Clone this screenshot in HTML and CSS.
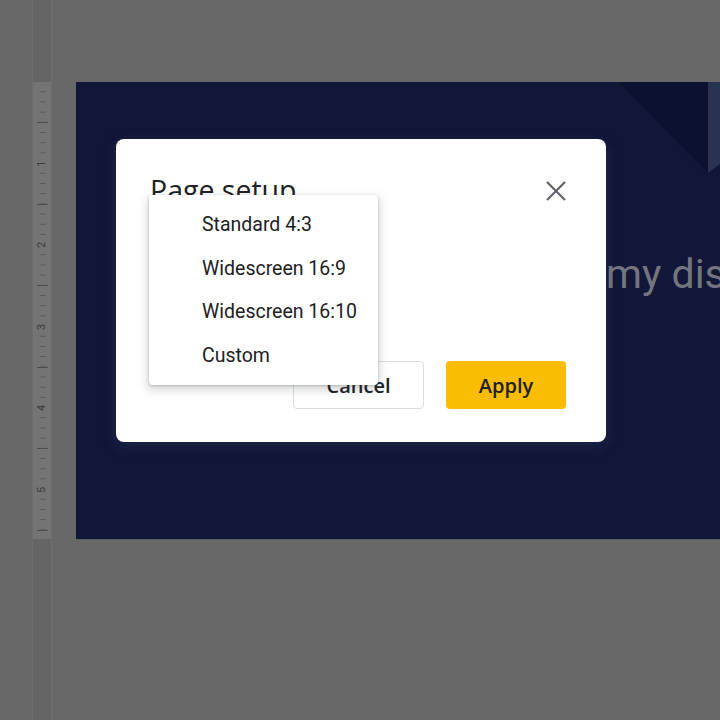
FILE: index.html
```html
<!DOCTYPE html>
<html lang="en">
<head>
    <meta charset="UTF-8">
    <meta name="viewport" content="width=device-width, initial-scale=1.0">
    <title>Page setup</title>
    <link rel="stylesheet" href="styles.css">
</head>
<body>
    <div class="gutter"></div>

    <div class="ruler">
        <div class="ruler-track">
            <div class="inch"><span class="inch-label">1</span></div>
            <div class="inch"><span class="inch-label">2</span></div>
            <div class="inch"><span class="inch-label">3</span></div>
            <div class="inch"><span class="inch-label">4</span></div>
            <div class="inch"><span class="inch-label">5</span></div>
        </div>
    </div>

    <main class="canvas">
        <div class="slide">
            <svg class="slide-corner" width="102" height="92" viewBox="0 0 102 92">
                <polygon points="0,0 90,0 90,91" fill="#0d1130"/>
                <polygon points="90,0 102,0 102,82 90,91" fill="#2a3254"/>
            </svg>
            <p class="slide-text">my display</p>
        </div>
    </main>

    <div class="dialog">
        <header class="dialog-head">
            <h2 class="dialog-title">Page setup</h2>
            <button class="icon-button" aria-label="Close">
                <svg width="20" height="20" viewBox="0 0 20 20">
                    <path d="M1 1L19 19M19 1L1 19" stroke="#5f6368" stroke-width="2.2" fill="none"/>
                </svg>
            </button>
        </header>

        <div class="dialog-body"></div>

        <footer class="dialog-actions">
            <button class="btn btn-outline">Cancel</button>
            <button class="btn btn-primary">Apply</button>
        </footer>

        <ul class="menu">
            <li class="menu-item">Standard 4:3</li>
            <li class="menu-item">Widescreen 16:9</li>
            <li class="menu-item">Widescreen 16:10</li>
            <li class="menu-item">Custom</li>
        </ul>
    </div>
</body>
</html>
```

FILE: styles.css
```css
* {
    margin: 0;
    padding: 0;
    box-sizing: border-box;
}

body {
    position: relative;
    display: flex;
    height: 720px;
    overflow: hidden;
    background-color: #676867;
    font-family: Roboto, "Liberation Sans", sans-serif;
}

.gutter {
    width: 32px;
    flex-shrink: 0;
}

/* vertical ruler, one inch = 81.5px, ticks every eighth */
.ruler {
    width: 20px;
    flex-shrink: 0;
    background-color: #646564;
    border-left: 1px solid #6c6d6c;
    border-right: 1px solid #6c6d6c;
}

.ruler-track {
    margin-top: 82px;
    height: 457px;
    background-color: #737473;
    background-image:
        repeating-linear-gradient(to bottom, transparent 0 40.25px, #4e4f4e 40.25px 41.25px, transparent 41.25px 81.5px),
        repeating-linear-gradient(to bottom, transparent 0 9.6875px, #595a59 9.6875px 10.6875px, transparent 10.6875px 10.1875px);
    background-size: 11px 100%, 6px 10.1875px;
    background-position: 4px 0, 7px 0;
    background-repeat: no-repeat, repeat-y;
}

.inch {
    position: relative;
    height: 81.5px;
}

.inch-label {
    position: absolute;
    left: 2px;
    bottom: -7px;
    width: 14px;
    height: 14px;
    line-height: 14px;
    text-align: center;
    font-size: 11px;
    color: #3b3c3b;
    background-color: #737473;
    transform: rotate(-90deg);
}

.canvas {
    flex: 1;
    padding: 82px 0 0 24px;
}

.slide {
    position: relative;
    width: 660px;
    height: 457px;
    background-color: #121739;
    box-shadow: 0 1px 1px #5c5d66;
    overflow: hidden;
}

.slide-corner {
    position: absolute;
    top: 0;
    left: 542px;
}

.slide-text {
    position: absolute;
    left: 530px;
    top: 168px;
    font-size: 41px;
    color: #74767f;
    white-space: nowrap;
}

/* modal */
.dialog {
    position: absolute;
    left: 116px;
    top: 139px;
    width: 490px;
    height: 303px;
    padding: 33px 40px 33px 34px;
    display: flex;
    flex-direction: column;
    background-color: #ffffff;
    border-radius: 8px;
    box-shadow: 0 4px 14px rgba(70, 78, 120, 0.25);
}

.dialog-head {
    display: flex;
    justify-content: space-between;
    align-items: center;
    height: 36px;
}

.dialog-title {
    font-family: "Open Sans", sans-serif;
    font-size: 28.5px;
    font-weight: 400;
    line-height: 36px;
    color: #202124;
}

.icon-button {
    display: flex;
    border: none;
    background: none;
    margin-top: 2px;
}

.dialog-body {
    flex: 1;
}

.dialog-actions {
    display: flex;
    justify-content: flex-end;
    gap: 22px;
}

.btn {
    height: 48px;
    border-radius: 4px;
    font-family: "Open Sans", sans-serif;
    font-size: 20px;
    font-weight: 600;
    color: #202124;
}

.btn-outline {
    width: 131px;
    background-color: #ffffff;
    border: 1px solid #dadce0;
}

.btn-primary {
    width: 120px;
    background-color: #fbbc04;
    border: none;
}

/* dropdown for page size */
.menu {
    position: absolute;
    left: 33px;
    top: 56px;
    width: 229px;
    padding: 8px 0;
    list-style: none;
    background-color: #ffffff;
    border-radius: 4px;
    box-shadow: 0 1px 3px rgba(60, 64, 67, 0.3), 0 4px 8px 3px rgba(60, 64, 67, 0.15);
}

.menu-item {
    height: 43.5px;
    line-height: 43.5px;
    padding-left: 53px;
    font-size: 19.5px;
    color: #202124;
}
```
